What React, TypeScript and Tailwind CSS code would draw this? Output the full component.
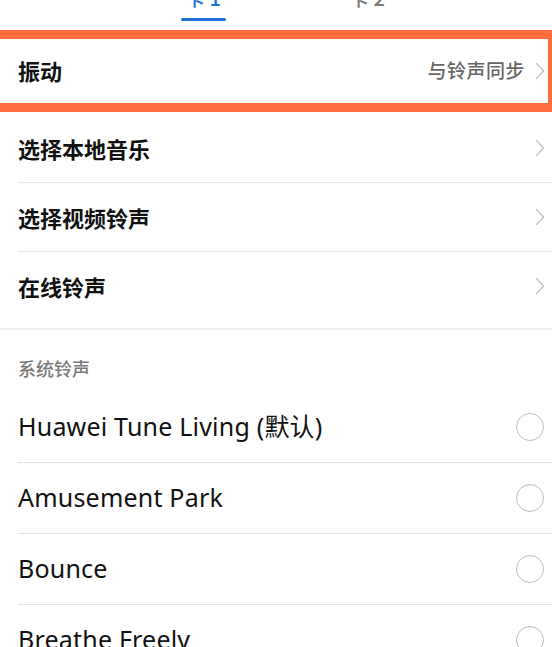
import React from 'react';

const cjk = '"Noto Sans CJK SC", "Noto Sans", sans-serif';
const latin = '"Noto Sans", "Noto Sans CJK SC", sans-serif';

const Chevron: React.FC = () => (
  <svg width="10" height="18" viewBox="0 0 10 18" fill="none" className="shrink-0">
    <path d="M1.5 1.5 L8.5 9 L1.5 16.5" stroke="#c4c4c4" strokeWidth="1.4" strokeLinecap="round" strokeLinejoin="round" />
  </svg>
);

const Radio: React.FC = () => (
  <div className="w-[28px] h-[28px] rounded-full border-[1.5px] border-[#bdbdbd] shrink-0" />
);

const App: React.FC = () => {
  const links = ['选择本地音乐', '选择视频铃声', '在线铃声'];
  const tones = ['Huawei Tune Living (默认)', 'Amusement Park', 'Bounce', 'Breathe Freely'];

  return (
    <div className="w-[552px] h-[647px] bg-white overflow-hidden" style={{ fontFamily: cjk }}>
      {/* tabs, cut off at the top */}
      <div className="h-[30px] flex pl-[121px] overflow-hidden">
        <div className="w-[164px] flex flex-col items-center">
          <span className="text-[20px] leading-[20px] -mt-[12px] text-[#1a73d9] font-medium">卡 1</span>
          <div className="mt-[10px] w-[45px] h-[3px] rounded-full bg-[#1a73d9]" />
        </div>
        <div className="w-[164px] flex flex-col items-center">
          <span className="text-[20px] leading-[20px] -mt-[12px] text-[#777] font-medium">卡 2</span>
        </div>
      </div>

      {/* highlighted row */}
      <div className="h-[82px] border-y-[9px] border-r-4 border-[#ff6d3f] flex items-center pl-[18px] pr-[3px]">
        <span className="flex-1 text-[22px] leading-[28px] -mt-[2px] font-semibold text-[#111]">振动</span>
        <span className="text-[19px] leading-[28px] -mt-[2px] font-medium text-[#666] mr-[10px] tracking-[0.5px]">与铃声同步</span>
        <Chevron />
      </div>

      <div className="pt-[2px]">
        {links.map((t, i) => (
          <div key={t} className="pl-[18px]">
            <div className="h-[68px] flex items-center pr-[7px]">
              <span className="flex-1 text-[22px] font-semibold text-[#111]">{t}</span>
              <Chevron />
            </div>
            {i < links.length - 1 && <div className="h-px bg-[#e6e6e6]" />}
          </div>
        ))}
      </div>

      <div className="mt-[8px] h-[2px] bg-[#f1f1f1]" />

      <div className="h-[62px] flex items-end pb-[12px] pl-[18px]">
        <span className="text-[18px] leading-[24px] font-medium text-[#7a7a7a]">系统铃声</span>
      </div>

      {tones.map((t, i) => (
        <div key={t} className="pl-[18px]">
          <div className="h-[70px] flex items-center pr-[8px]">
            <span className="flex-1 text-[25px] text-[#111] tracking-[0.2px]" style={{ fontFamily: latin }}>{t}</span>
            <Radio />
          </div>
          {i < tones.length - 1 && <div className="h-px bg-[#e3e3e3]" />}
        </div>
      ))}
    </div>
  );
};

export default App;
